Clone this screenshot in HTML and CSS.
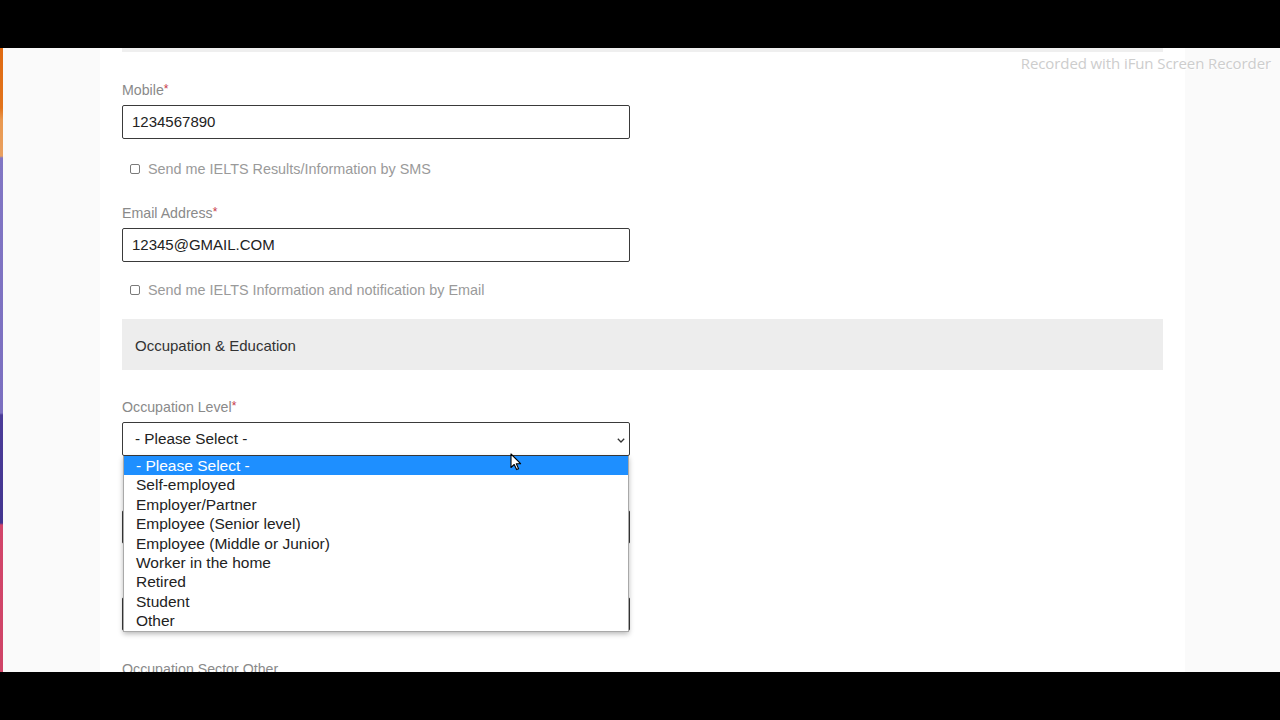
FILE: index.html
```html
<!DOCTYPE html>
<html lang="en">
<head>
<meta charset="utf-8">
<title>IELTS Registration</title>
<link rel="stylesheet" href="styles.css">
</head>
<body>
<div class="screen">
  <div class="blackbar"></div>
  <div class="viewport">
    <div class="strip"></div>
    <div class="gutter"></div>
    <main class="main">
      <div class="prev-bar"></div>

      <div class="field first">
        <label class="label">Mobile<span class="req">*</span></label>
        <div class="input">1234567890</div>
      </div>
      <div class="check-row"><span class="check"></span><span>Send me IELTS Results/Information by SMS</span></div>

      <div class="field email">
        <label class="label">Email Address<span class="req">*</span></label>
        <div class="input">12345@GMAIL.COM</div>
      </div>
      <div class="check-row second"><span class="check"></span><span>Send me IELTS Information and notification by Email</span></div>

      <div class="section-head">Occupation &amp; Education</div>

      <div class="field occ">
        <label class="label">Occupation Level<span class="req">*</span></label>
        <div class="select-wrap">
          <div class="select">
            <span>- Please Select -</span>
            <svg class="chev" width="8" height="5" viewBox="0 0 8 5"><path d="M0.8 0.8 L4 4 L7.2 0.8" fill="none" stroke="#333" stroke-width="1.3"/></svg>
          </div>
          <ul class="dropdown">
            <li class="active">- Please Select -</li>
            <li>Self-employed</li>
            <li>Employer/Partner</li>
            <li>Employee (Senior level)</li>
            <li>Employee (Middle or Junior)</li>
            <li>Worker in the home</li>
            <li>Retired</li>
            <li>Student</li>
            <li>Other</li>
          </ul>
        </div>
      </div>

      <div class="field next">
        <div class="label spacer"></div>
        <div class="input"></div>
      </div>
      <div class="field next2">
        <div class="label spacer"></div>
        <div class="input"></div>
      </div>
      <div class="field next3">
        <label class="label">Occupation Sector Other</label>
        <div class="input"></div>
      </div>
    </main>
    <div class="gutter right"></div>
    <div class="watermark">Recorded with iFun Screen Recorder</div>
    <svg class="cursor" width="12" height="18" viewBox="0 0 12 18"><path d="M1 1 L1 14.5 L4.2 11.5 L6.6 16.6 L8.6 15.7 L6.3 10.7 L10.6 10.7 Z" fill="#fff" stroke="#000" stroke-width="1.1" stroke-linejoin="round"/></svg>
  </div>
  <div class="blackbar"></div>
</div>
</body>
</html>
```
FILE: styles.css
```css
* { box-sizing: border-box; }
html, body { margin: 0; padding: 0; background: #000; }
body { font-family: "Liberation Sans", Arial, sans-serif; }

.screen { width: 1280px; height: 720px; display: flex; flex-direction: column; overflow: hidden; }
.blackbar { height: 48px; background: #000; flex: none; }
.viewport { height: 624px; position: relative; overflow: hidden; display: flex; background: #fafafa; }

.strip {
  width: 3px; flex: none;
  background: linear-gradient(to bottom,
    #df6a12 0px, #e2741c 60px, #e9984f 72px, #e9a060 108px,
    #8176c4 110px, #7b6fc0 365px,
    #4b3c99 367px, #43358f 475px,
    #d2456a 477px, #cf4467 624px);
}
.gutter { width: 97px; flex: none; background: #fafafa; }
.gutter.right { flex: 1; }

.main { width: 1085px; flex: none; background: #fff; padding: 0 22px; position: relative; }

.prev-bar { height: 4px; background: #efefef; }

.field { position: relative; }
.field.first { margin-top: 29px; }
.field.email { margin-top: 27px; }
.field.occ { margin-top: 28px; }
.field.next { margin-top: 31px; }
.field.next2 { margin-top: 30px; }
.field.next3 { margin-top: 30px; }

.label { display: block; font-size: 14.2px; line-height: 16px; color: #8a8a8a; margin-bottom: 7px; }
.label.spacer { height: 16px; }
.req { color: #c8384a; font-size: 12px; vertical-align: 2px; }

.input {
  width: 508px; height: 34px;
  border: 1px solid #3a3a3a; border-radius: 2px;
  font-size: 15px; line-height: 32px; color: #222;
  padding-left: 9px; background: #fff;
}

.check-row { display: flex; align-items: center; margin-top: 22px; height: 16px; font-size: 14.4px; color: #9a9a9a; }
.check-row.second { margin-top: 20px; }
.check { width: 10px; height: 10px; border: 1px solid #7a7a7a; border-radius: 2px; margin-left: 8px; margin-right: 8px; background: #fff; }

.section-head {
  margin-top: 21px; height: 51px;
  background: #ededed; color: #333;
  font-size: 15px; line-height: 53px; padding-left: 13px;
}

.select-wrap { position: relative; width: 508px; }
.select {
  height: 34px; border: 1px solid #3a3a3a; border-radius: 2px;
  display: flex; align-items: center; justify-content: space-between;
  padding: 0 4px 0 12px; font-size: 15.3px; color: #222; background: #fff;
}
.chev { margin-top: 2px; }

.dropdown {
  position: absolute; left: 1px; top: 34px; width: 506px;
  margin: 0; padding: 0; list-style: none;
  background: #fff; border: 1px solid #a9a9a9; border-top: none;
  box-shadow: 0 2px 5px rgba(0,0,0,0.28);
  z-index: 5;
}
.dropdown li { height: 19.4px; line-height: 19.4px; font-size: 15.5px; color: #222; padding-left: 12px; }
.dropdown li.active { background: #1e8fff; color: #fff; }

.watermark {
  position: absolute; right: 9px; top: 5px;
  font-family: "Open Sans", "Liberation Sans", sans-serif;
  font-size: 15px; color: #cdcdcd; letter-spacing: -0.1px;
  text-shadow: 0 0 1px #fff, 1px 1px 0 #fff;
}

.cursor { position: absolute; left: 510px; top: 405px; z-index: 10; }
```
